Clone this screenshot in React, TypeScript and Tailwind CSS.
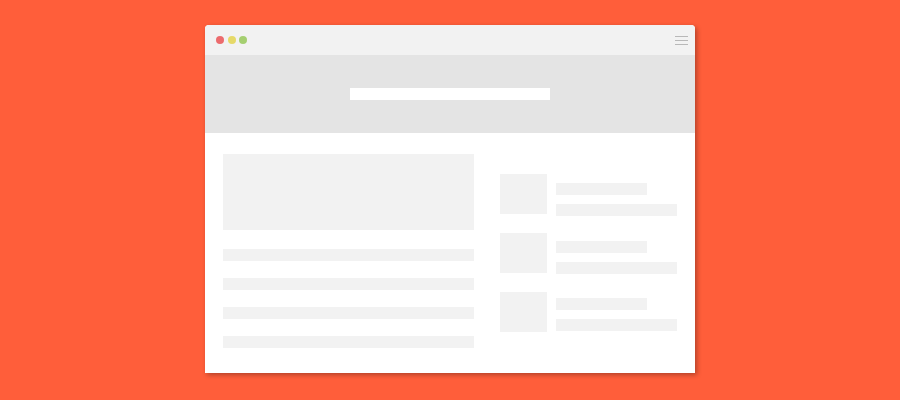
export default function App() {
  // text offset inside each row differs slightly in the mockup
  const rows = ['pt-[9px]', 'pt-[8px]', 'pt-[6px]'];
  const lines = [0, 1, 2, 3];

  return (
    <div className="flex h-[400px] w-[900px] justify-center bg-[#ff5e3a] pt-[25px]">
      {/* Browser window */}
      <div className="flex h-[348px] w-[490px] flex-col overflow-hidden rounded-t-[4px] bg-white shadow-[2px_2px_5px_rgba(0,0,0,0.3)]">
        {/* Title bar */}
        <div className="flex h-[30px] items-center justify-between bg-[#f2f2f2] pl-[11px] pr-[7px]">
          <div className="flex items-center gap-[3.5px]">
            <span className="h-[8px] w-[8px] rounded-full bg-[#ec6b6d]" />
            <span className="h-[8px] w-[8px] rounded-full bg-[#e6d968]" />
            <span className="h-[8px] w-[8px] rounded-full bg-[#a5cf70]" />
          </div>
          <div className="mt-[1px] flex w-[13px] flex-col gap-[2.5px]">
            <span className="h-[1.5px] bg-[#b8b8b8]" />
            <span className="h-[1.5px] bg-[#b8b8b8]" />
            <span className="h-[1.5px] bg-[#b8b8b8]" />
          </div>
        </div>

        {/* Header band */}
        <div className="flex h-[78px] items-center justify-center bg-[#e4e4e4]">
          <div className="h-[12px] w-[200px] bg-white" />
        </div>

        {/* Content */}
        <div className="flex flex-1 gap-[26px] px-[18px] pt-[21px]">
          <div className="flex w-[251px] flex-col">
            <div className="h-[76px] bg-[#f2f2f2]" />
            {lines.map((i) => (
              <div
                key={i}
                className={`h-[12px] bg-[#f2f2f2] ${i === 0 ? 'mt-[19px]' : 'mt-[17px]'}`}
              />
            ))}
          </div>

          <div className="flex flex-1 flex-col gap-[19px] pt-[20px]">
            {rows.map((pad, i) => (
              <div key={i} className="flex h-[40px] gap-[9px]">
                <div className="h-[40px] w-[47px] bg-[#f2f2f2]" />
                <div className={`flex flex-1 flex-col gap-[9px] ${pad}`}>
                  <div className="h-[12px] w-[91px] shrink-0 bg-[#f2f2f2]" />
                  <div className="h-[12px] w-[121px] shrink-0 bg-[#f2f2f2]" />
                </div>
              </div>
            ))}
          </div>
        </div>
      </div>
    </div>
  );
}
